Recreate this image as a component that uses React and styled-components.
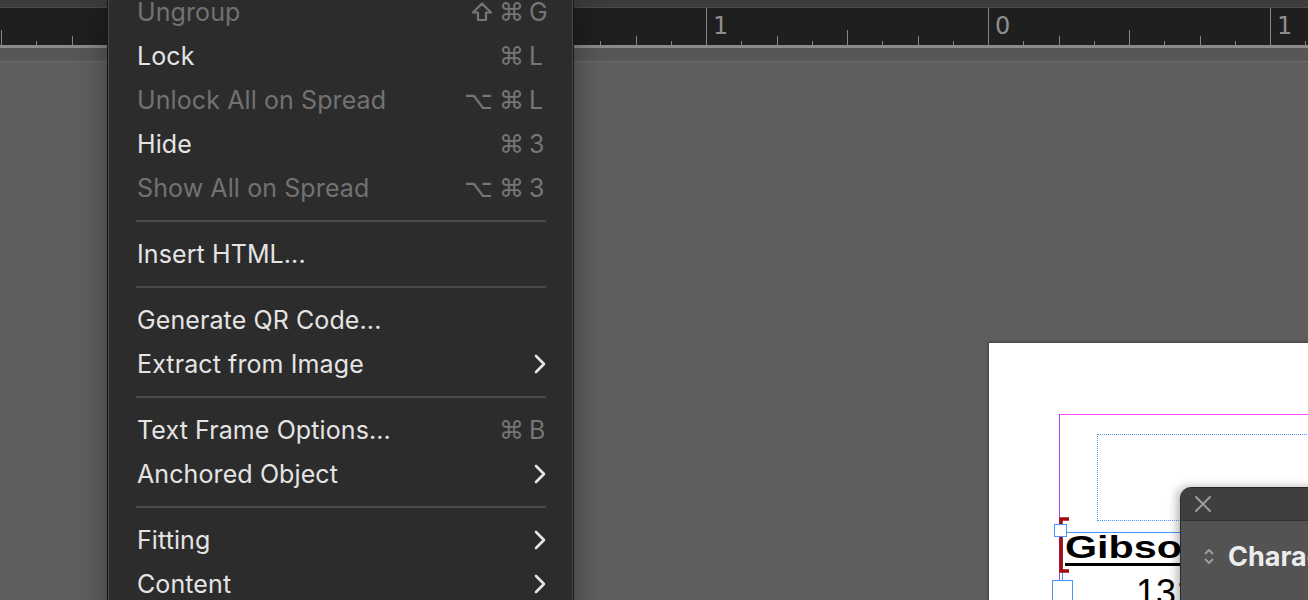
import styled, { createGlobalStyle } from "styled-components";

const GlobalStyle = createGlobalStyle`
  html, body {
    margin: 0;
    padding: 0;
    background: #5f5f5f;
  }
`;

const Screen = styled.div`
  position: relative;
  width: 1308px;
  height: 600px;
  overflow: hidden;
  display: flex;
  flex-direction: column;
  background: #5f5f5f;
  font-family: "Inter", "DejaVu Sans", sans-serif;
`;

const TopBand = styled.div`
  height: 7px;
  background: #3c3c3c;
  border-bottom: 1px solid #4c4c4c;
`;

const RulerBar = styled.div`
  height: 37px;
  background: #1f1f1f;
  border-bottom: 3px solid #8a8a8a;
`;

const Strip = styled.div`
  height: 13px;
  background: #575757;
  border-bottom: 1px solid #6b6b6b;
`;

const Canvas = styled.div`
  position: relative;
  flex: 1;
  background: #5f5f5f;
`;

/* ---------- ruler ---------- */
const MAJOR = 706;
const STEP = 282 / 8;
const LABELS = { 0: "1", 1: "0", 2: "1", "-1": "2", "-2": "3" };

const Ruler = () => {
  const ticks = [];
  for (let i = -22; i <= 22; i++) {
    const x = Math.round(MAJOR + i * STEP) + 0.5;
    const m = ((i % 8) + 8) % 8;
    let y1 = 33;
    if (m === 0) y1 = 0;
    else if (m === 4) y1 = 22;
    else if (m === 2 || m === 6) y1 = 28;
    ticks.push(
      <line key={i} x1={x} x2={x} y1={y1} y2={37} stroke="#858585" strokeWidth="1" />
    );
  }
  const labels = [];
  for (let k = -2; k <= 2; k++) {
    const x = MAJOR + k * 282 + 7;
    labels.push(
      <text key={k} x={x} y={26} fill="#8e8e8e" fontSize="24" fontFamily="DejaVu Sans, sans-serif">
        {LABELS[k]}
      </text>
    );
  }
  return (
    <RulerBar>
      <svg width="1308" height="37" style={{ display: "block" }}>
        {ticks}
        {labels}
      </svg>
    </RulerBar>
  );
};

/* ---------- context menu ---------- */
const Menu = styled.div`
  position: absolute;
  left: 107px;
  top: -11px;
  width: 465px;
  background: #2c2c2c;
  border: 1px solid #151515;
  box-shadow: inset 0 0 0 1px #4a4a4a, 0 10px 30px rgba(0, 0, 0, 0.35);
  padding-bottom: 20px;
`;

const Item = styled.div`
  height: 44px;
  display: flex;
  align-items: center;
  padding: 0 26px 0 29px;
  font-size: 25px;
  color: ${(p) => (p.$disabled ? "#727272" : "#e4e4e4")};
  letter-spacing: 0.1px;
`;

const Label = styled.span`
  flex: 1;
  white-space: nowrap;
`;

const Shortcut = styled.span`
  display: flex;
  align-items: center;
  gap: 6px;
  color: #767676;
`;

const Glyph = styled.span`
  font-family: "DejaVu Sans", sans-serif;
  font-size: 25px;
  line-height: 1;
`;

const Key = styled.span`
  width: 18px;
  margin-left: -1px;
  text-align: left;
`;

const Separator = styled.div`
  height: 2px;
  margin: 10px 27px 10px 28px;
  background: #494949;
`;

const ShiftIcon = () => (
  <svg width="22" height="22" viewBox="0 0 22 22" style={{ flexShrink: 0 }}>
    <path
      d="M11 2.5 L20 11.5 H15 V19 H7 V11.5 H2 Z"
      fill="none"
      stroke="#767676"
      strokeWidth="2.2"
      strokeLinejoin="round"
    />
  </svg>
);

const Chevron = () => (
  <svg width="14" height="22" viewBox="0 0 14 22" style={{ flexShrink: 0 }}>
    <polyline
      points="3,3 11,11 3,19"
      fill="none"
      stroke="#e6e6e6"
      strokeWidth="2.6"
      strokeLinecap="round"
      strokeLinejoin="round"
    />
  </svg>
);

const menuItems = [
  { label: "Ungroup", mods: ["shift", "⌘"], key: "G", disabled: true },
  { label: "Lock", mods: ["⌘"], key: "L" },
  { label: "Unlock All on Spread", mods: ["⌥", "⌘"], key: "L", disabled: true },
  { label: "Hide", mods: ["⌘"], key: "3" },
  { label: "Show All on Spread", mods: ["⌥", "⌘"], key: "3", disabled: true },
  { sep: true },
  { label: "Insert HTML..." },
  { sep: true },
  { label: "Generate QR Code..." },
  { label: "Extract from Image", sub: true },
  { sep: true },
  { label: "Text Frame Options...", mods: ["⌘"], key: "B" },
  { label: "Anchored Object", sub: true },
  { sep: true },
  { label: "Fitting", sub: true },
  { label: "Content", sub: true },
];

const ContextMenu = () => (
  <Menu>
    {menuItems.map((it, i) =>
      it.sep ? (
        <Separator key={i} />
      ) : (
        <Item key={i} $disabled={it.disabled}>
          <Label>{it.label}</Label>
          {it.key && (
            <Shortcut>
              {it.mods.map((m) =>
                m === "shift" ? <ShiftIcon key={m} /> : <Glyph key={m}>{m}</Glyph>
              )}
              <Key>{it.key}</Key>
            </Shortcut>
          )}
          {it.sub && <Chevron />}
        </Item>
      )
    )}
  </Menu>
);

/* ---------- document page ---------- */
const Page = styled.div`
  position: absolute;
  left: 989px;
  top: 281px;
  width: 400px;
  height: 400px;
  background: #ffffff;
  box-shadow: -1px -1px 0 #474747, -2px -2px 3px rgba(0, 0, 0, 0.15);
`;

const MarginTop = styled.div`
  position: absolute;
  left: 70px;
  right: 0;
  top: 71px;
  height: 1px;
  background: #ff45ff;
`;

const MarginLeft = styled.div`
  position: absolute;
  left: 70px;
  top: 71px;
  bottom: 0;
  width: 1px;
  background: #a845ff;
`;

const DottedFrame = styled.div`
  position: absolute;
  left: 108px;
  top: 91px;
  width: 400px;
  height: 85px;
  border: 1.5px dotted #4d94ff;
`;

const TextFrame = styled.div`
  position: absolute;
  left: 73px;
  top: 189px;
  right: 0;
  bottom: 0;
  border-top: 1.5px solid #4d94ff;
  border-left: 1.5px solid #4d94ff;
`;

const Handle = styled.div`
  position: absolute;
  left: ${(p) => p.$x}px;
  top: ${(p) => p.$y}px;
  width: ${(p) => p.$size}px;
  height: ${(p) => p.$size}px;
  box-sizing: border-box;
  background: #ffffff;
  border: 1.5px solid #4d94ff;
`;

const Bracket = styled.svg`
  position: absolute;
  left: 69px;
  top: 174px;
`;

const Headline = styled.div`
  position: absolute;
  left: 76px;
  top: 188px;
  font-family: "Liberation Sans", Arial, sans-serif;
  font-weight: 700;
  font-size: 32px;
  line-height: 32px;
  color: #000;
  transform: scaleX(1.29);
  transform-origin: left top;
  text-decoration: underline;
  text-decoration-thickness: 3px;
  text-underline-offset: 5px;
  white-space: nowrap;
`;

const BodyLine = styled.div`
  position: absolute;
  left: 147px;
  top: 232px;
  font-family: "Liberation Sans", Arial, sans-serif;
  font-size: 36px;
  line-height: 36px;
  color: #000;
  white-space: nowrap;
`;

/* ---------- character panel ---------- */
const Panel = styled.div`
  position: absolute;
  left: 1180px;
  top: 425px;
  width: 160px;
  height: 200px;
  border-radius: 11px 0 0 0;
  overflow: hidden;
  border: 1px solid #2b2b2b;
  background: #535353;
  box-shadow: -3px 0 10px rgba(0, 0, 0, 0.3);
`;

const PanelHeader = styled.div`
  height: 32px;
  display: flex;
  align-items: center;
  padding-left: 13px;
  background: #3f3f3f;
  border-bottom: 1px solid #333333;
`;

const PanelRow = styled.div`
  display: flex;
  align-items: center;
  gap: 13px;
  padding: 20px 0 0 22px;
  height: 30px;
`;

const PanelTitle = styled.span`
  font-family: "Inter", "Liberation Sans", sans-serif;
  font-weight: 700;
  font-size: 27px;
  color: #ececec;
  white-space: nowrap;
`;

const CloseIcon = () => (
  <svg width="18" height="18" viewBox="0 0 18 18" style={{ flexShrink: 0 }}>
    <path d="M2 2 L16 16 M16 2 L2 16" stroke="#9c9c9c" strokeWidth="2" strokeLinecap="round" />
  </svg>
);

const UpDownIcon = () => (
  <svg width="12" height="17" viewBox="0 0 12 17" style={{ flexShrink: 0 }}>
    <polyline points="2,6 6,2 10,6" fill="none" stroke="#a0a0a0" strokeWidth="1.8" strokeLinejoin="round" />
    <polyline points="2,11 6,15 10,11" fill="none" stroke="#a0a0a0" strokeWidth="1.8" strokeLinejoin="round" />
  </svg>
);

export default function App() {
  return (
    <>
      <GlobalStyle />
      <Screen>
        <TopBand />
        <Ruler />
        <Strip />
        <Canvas>
          <Page>
            <MarginTop />
            <MarginLeft />
            <DottedFrame />
            <TextFrame />
            <Bracket width="12" height="56" viewBox="0 0 12 56">
              <path d="M11 2 H3 V54 H11" fill="none" stroke="#a30a0a" strokeWidth="3.5" />
            </Bracket>
            <Headline>Gibson</Headline>
            <BodyLine>1315</BodyLine>
            <Handle $x={65} $y={181} $size={13} />
            <Handle $x={63} $y={237} $size={21} />
          </Page>
          <Panel>
            <PanelHeader>
              <CloseIcon />
            </PanelHeader>
            <PanelRow>
              <UpDownIcon />
              <PanelTitle>Character</PanelTitle>
            </PanelRow>
          </Panel>
        </Canvas>
        <ContextMenu />
      </Screen>
    </>
  );
}
